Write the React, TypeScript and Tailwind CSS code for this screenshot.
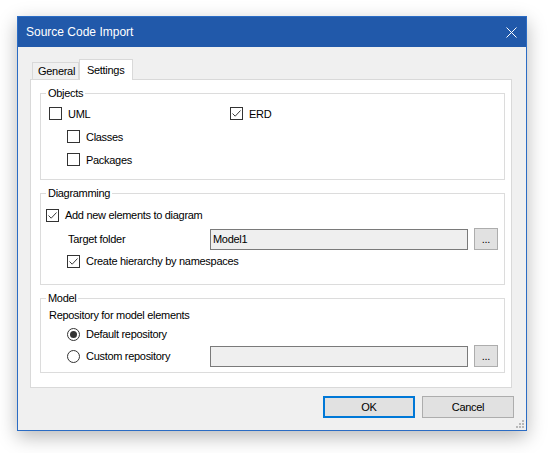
import React from "react";

function CheckBox({ checked }: { checked?: boolean }) {
  return (
    <span className="w-[13px] h-[13px] shrink-0 border border-[#333333] bg-white flex items-center justify-center">
      {checked && (
        <svg width="11" height="11" viewBox="0 0 11 11">
          <path d="M1.5 5.5 L4.2 8.2 L9.5 2.5" stroke="#3c3c3c" strokeWidth="1" fill="none" />
        </svg>
      )}
    </span>
  );
}

function Radio({ checked }: { checked?: boolean }) {
  return (
    <span className="w-[13px] h-[13px] shrink-0 rounded-full border border-[#333333] bg-white flex items-center justify-center">
      {checked && <span className="w-[7px] h-[7px] rounded-full bg-[#333333]" />}
    </span>
  );
}

function Group({ label, className, children }: { label: string; className: string; children: React.ReactNode }) {
  return (
    <div className={"relative border border-[#dcdcdc] " + className}>
      <span className="absolute -top-[8px] left-[5px] h-[14px] bg-white px-[2px] leading-[14px]">{label}</span>
      {children}
    </div>
  );
}

function Browse() {
  return (
    <div className="ml-[6px] w-[24px] h-[22px] border border-[#adadad] bg-[#e1e1e1] flex items-center justify-center leading-none">
      ...
    </div>
  );
}

export default function App() {
  return (
    <div className="w-[548px] h-[453px] bg-white pt-[16px] pl-[17px] font-['Segoe_UI','Liberation_Sans',Arial,sans-serif] text-[11px] leading-[14px] tracking-[-0.3px] text-black">
      <div className="w-[510px] h-[415px] border border-[#2b6cc4] bg-[#f0f0f0] flex flex-col shadow-[0_6px_18px_rgba(0,0,0,0.28)]">
        {/* title bar */}
        <div className="h-[30px] shrink-0 bg-[#2159aa] flex items-center justify-between pl-[8px] pr-[9px] text-white text-[12px] tracking-normal">
          <span>Source Code Import</span>
          <svg width="11" height="11" viewBox="0 0 11 11">
            <path d="M0.5 0.5 L10.5 10.5 M10.5 0.5 L0.5 10.5" stroke="white" strokeWidth="1" />
          </svg>
        </div>

        {/* body */}
        <div className="flex-1 pt-[12px] pl-[12px] pr-[12px]">
          {/* tabs */}
          <div className="flex items-end h-[20px] pl-[2px]">
            <div className="w-[47px] h-[17px] border border-b-0 border-[#d9d9d9] bg-[#f0f0f0] flex items-center pl-[5px]">
              General
            </div>
            <div className="relative z-10 -mb-px w-[54px] h-[21px] border border-b-0 border-[#d9d9d9] bg-white flex items-center pl-[7px] pb-[1px]">
              Settings
            </div>
          </div>

          {/* panel */}
          <div className="w-[482px] bg-white border border-[#d9d9d9] pt-[13px] pb-[14px] pl-[9px] pr-[6px] flex flex-col gap-[13px]">
            <Group label="Objects" className="pt-[8px] pb-[8px] pl-[8px]">
              <div className="h-[23px] flex items-center">
                <div className="w-[181px] flex items-center gap-[6px]">
                  <CheckBox />
                  <span>UML</span>
                </div>
                <div className="flex items-center gap-[6px]">
                  <CheckBox checked />
                  <span>ERD</span>
                </div>
              </div>
              <div className="h-[23px] flex items-center gap-[6px] ml-[18px]">
                <CheckBox />
                <span>Classes</span>
              </div>
              <div className="h-[23px] flex items-center gap-[6px] ml-[18px]">
                <CheckBox />
                <span>Packages</span>
              </div>
            </Group>

            <Group label="Diagramming" className="pt-[10px] pb-[14px] pl-[5px]">
              <div className="h-[22px] flex items-center gap-[6px]">
                <CheckBox checked />
                <span>Add new elements to diagram</span>
              </div>
              <div className="h-[26px] flex items-center ml-[22px]">
                <span className="w-[142px]">Target folder</span>
                <div className="w-[258px] h-[21px] border border-[#7a7a7a] bg-[#efefef] flex items-center pl-[2px]">
                  Model1
                </div>
                <Browse />
              </div>
              <div className="h-[18px] flex items-center gap-[6px] ml-[21px]">
                <CheckBox checked />
                <span>Create hierarchy by namespaces</span>
              </div>
            </Group>

            <Group label="Model" className="pt-[8px] pb-[5px] pl-[8px]">
              <div className="h-[16px] flex items-center">Repository for model elements</div>
              <div className="h-[22px] flex items-center gap-[6px] ml-[18px]">
                <Radio checked />
                <span>Default repository</span>
              </div>
              <div className="h-[22px] flex items-center ml-[18px]">
                <div className="w-[143px] flex items-center gap-[6px]">
                  <Radio />
                  <span>Custom repository</span>
                </div>
                <div className="w-[258px] h-[21px] border border-[#7a7a7a] bg-[#efefef]" />
                <Browse />
              </div>
            </Group>
          </div>

          {/* buttons */}
          <div className="relative flex justify-end gap-[7px] mt-[8px]">
            <div className="w-[92px] h-[22px] border-2 border-[#0078d7] bg-[#e1e1e1] flex items-center justify-center">
              OK
            </div>
            <div className="w-[92px] h-[22px] border border-[#adadad] bg-[#e1e1e1] flex items-center justify-center">
              Cancel
            </div>
            <svg className="absolute right-[-11px] top-[24px]" width="9" height="9" viewBox="0 0 9 9">
              <rect x="6" y="0" width="2" height="2" fill="#b8b8b8" />
              <rect x="3" y="3" width="2" height="2" fill="#b8b8b8" />
              <rect x="6" y="3" width="2" height="2" fill="#b8b8b8" />
              <rect x="0" y="6" width="2" height="2" fill="#b8b8b8" />
              <rect x="3" y="6" width="2" height="2" fill="#b8b8b8" />
              <rect x="6" y="6" width="2" height="2" fill="#b8b8b8" />
            </svg>
          </div>
        </div>
      </div>
    </div>
  );
}
